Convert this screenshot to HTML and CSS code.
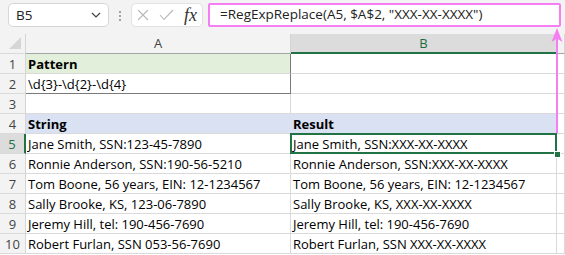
FILE: index.html
```html
<!DOCTYPE html>
<html>
<head>
<meta charset="utf-8">
<link rel="stylesheet" href="styles.css">
</head>
<body>
<div class="toolbar">
  <div class="namebox"><span>B5</span><svg class="chev" width="10" height="6" viewBox="0 0 10 6"><path d="M1 1 L5 5 L9 1" fill="none" stroke="#444" stroke-width="1.2"/></svg></div>
  <div class="dots"><i></i><i></i><i></i></div>
  <div class="fxbox">
    <svg width="12" height="12" viewBox="0 0 12 12"><path d="M1 1L11 11M11 1L1 11" stroke="#b8b8b8" stroke-width="1.1"/></svg>
    <svg width="15" height="12" viewBox="0 0 15 12"><path d="M1 6L5 10.5L14 1" fill="none" stroke="#b8b8b8" stroke-width="1.1"/></svg>
    <span class="fx">fx</span>
  </div>
  <div class="formula">=RegExpReplace(A5, $A$2, "XXX-XX-XXXX")</div>
</div>
<div class="sheet">
  <div class="c h corner"><svg width="14" height="14" viewBox="0 0 14 14"><path d="M13 1V13H1Z" fill="#d6d6d6"/></svg></div>
  <div class="c h ch">A</div>
  <div class="c h ch chsel">B</div>
  <div class="c h ch"></div>

  <div class="c h rh">1</div>
  <div class="c b green box-r">Pattern</div>
  <div class="c"></div>
  <div class="c"></div>

  <div class="c h rh">2</div>
  <div class="c box-r box-b">\d{3}-\d{2}-\d{4}</div>
  <div class="c"></div>
  <div class="c"></div>

  <div class="c h rh">3</div>
  <div class="c"></div>
  <div class="c"></div>
  <div class="c"></div>

  <div class="c h rh">4</div>
  <div class="c b blue">String</div>
  <div class="c b blue">Result</div>
  <div class="c"></div>

  <div class="c h rh rhsel">5</div>
  <div class="c">Jane Smith, SSN:123-45-7890</div>
  <div class="c sel">Jane Smith, SSN:XXX-XX-XXXX</div>
  <div class="c"></div>

  <div class="c h rh">6</div>
  <div class="c">Ronnie Anderson, SSN:190-56-5210</div>
  <div class="c">Ronnie Anderson, SSN:XXX-XX-XXXX</div>
  <div class="c"></div>

  <div class="c h rh">7</div>
  <div class="c">Tom Boone, 56 years, EIN: 12-1234567</div>
  <div class="c">Tom Boone, 56 years, EIN: 12-1234567</div>
  <div class="c"></div>

  <div class="c h rh">8</div>
  <div class="c">Sally Brooke, KS, 123-06-7890</div>
  <div class="c">Sally Brooke, KS, XXX-XX-XXXX</div>
  <div class="c"></div>

  <div class="c h rh">9</div>
  <div class="c">Jeremy Hill, tel: 190-456-7690</div>
  <div class="c">Jeremy Hill, tel: 190-456-7690</div>
  <div class="c"></div>

  <div class="c h rh">10</div>
  <div class="c">Robert Furlan, SSN 053-56-7690</div>
  <div class="c">Robert Furlan, SSN XXX-XX-XXXX</div>
  <div class="c"></div>
</div>
<svg class="arrow" width="16" height="110" viewBox="0 0 16 110">
  <rect x="6" y="10" width="2" height="97" fill="#f47ef2"/>
  <path d="M7 2 L12.5 16 L7 12.5 L1.5 16 Z" fill="#f47ef2"/>
</svg>
</body>
</html>
```

FILE: styles.css
```css
body {
  margin: 0;
  width: 565px;
  height: 255px;
  overflow: hidden;
  background: #fff;
  font-family: "Open Sans", sans-serif;
  position: relative;
}

.toolbar {
  height: 34px;
  box-sizing: border-box;
  padding: 3px 4px 0 8px;
  display: flex;
  align-items: flex-start;
  background: #f3f3f3;
}

.namebox {
  width: 101px;
  height: 24px;
  box-sizing: border-box;
  border: 1px solid #d6d6d6;
  border-radius: 5px;
  background: #fff;
  display: flex;
  align-items: center;
  justify-content: space-between;
  padding: 0 7px 0 7px;
  font-size: 13.5px;
  color: #222;
}

.dots {
  width: 22px;
  display: flex;
  flex-direction: column;
  align-items: center;
  gap: 2px;
  padding-top: 8px;
}

.dots i {
  display: block;
  width: 2px;
  height: 2px;
  background: #8a8a8a;
  border-radius: 50%;
}

.fxbox {
  width: 72px;
  height: 24px;
  box-sizing: border-box;
  border: 1px solid #e2e2e2;
  border-radius: 5px;
  background: #fff;
  display: flex;
  align-items: center;
  padding-left: 5px;
  gap: 10px;
}

.fx {
  font-family: "Liberation Serif", serif;
  font-style: italic;
  font-size: 18px;
  color: #333;
  line-height: 20px;
}

.formula {
  margin-left: 5px;
  flex: 1;
  height: 24px;
  box-sizing: border-box;
  border: 2px solid #f47ef2;
  border-radius: 2px;
  background: #fff;
  font-size: 13.5px;
  padding-left: 10px;
  line-height: 19px;
  color: #222;
  white-space: nowrap;
}

.sheet {
  display: grid;
  grid-template-columns: 26px 265px 266px 1fr;
  grid-auto-rows: 20px;
}

.c {
  box-sizing: border-box;
  border-right: 1px solid #dadada;
  border-bottom: 1px solid #dadada;
  padding: 2px 2px 0;
  line-height: 17px;
  font-size: 13px;
  white-space: nowrap;
  color: #000;
}

.h {
  background: #f3f3f3;
  text-align: center;
  color: #444;
  border-right-color: #d4d4d4;
  padding: 2px 0 0;
}

.ch {
  border-bottom-color: #a6a6a6;
  padding-top: 1px;
}

.corner {
  display: flex;
  align-items: flex-end;
  justify-content: flex-end;
  padding: 0 3px 3px 0;
}

.chsel {
  background: #dcdcdc;
  color: #1d6b40;
  border-bottom: 2px solid #217346;
}

.rhsel {
  background: #dcdcdc;
  color: #217346;
  border-right: 2px solid #217346;
}

.b {
  font-weight: 700;
}

.green {
  background: #e2efda;
}

.blue {
  background: #d9e1f2;
  border-right-color: #d9e1f2;
}

.box-r {
  border-right-color: #7a7a7a;
}

.box-b {
  border-bottom-color: #7a7a7a;
}

.sel {
  position: relative;
}

.sel::after {
  content: "";
  position: absolute;
  left: -1px;
  top: -1px;
  right: -1px;
  bottom: -1px;
  border: 2px solid #217346;
}

.sel::before {
  content: "";
  position: absolute;
  right: -5px;
  bottom: -5px;
  width: 5px;
  height: 5px;
  background: #217346;
  border: 1px solid #fff;
  z-index: 2;
}

.arrow {
  position: absolute;
  left: 550px;
  top: 26px;
}
```
